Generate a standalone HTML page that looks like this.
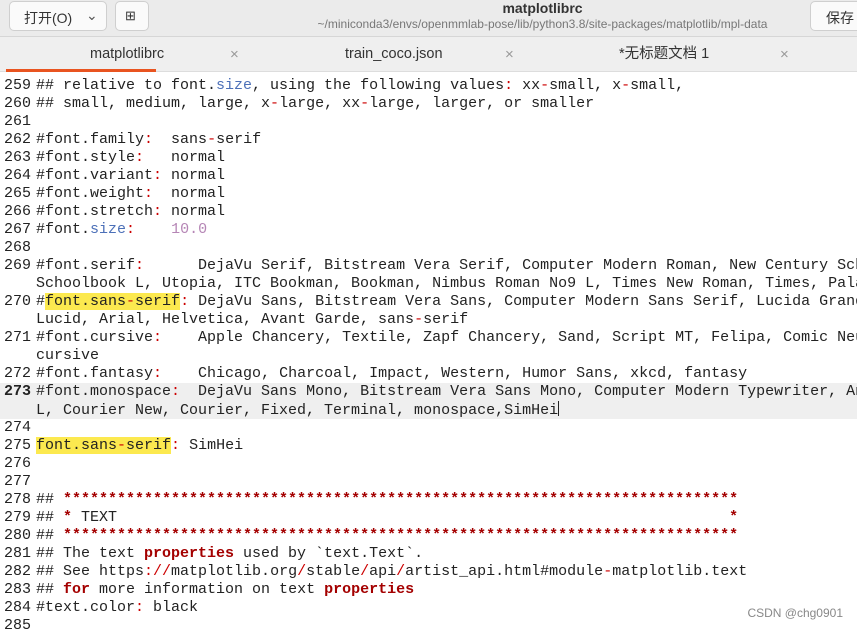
<!DOCTYPE html>
<html><head><meta charset="utf-8"><style>
*{margin:0;padding:0;box-sizing:border-box}
body{width:857px;height:631px;overflow:hidden;background:#fff;font-family:"Liberation Sans","Noto Sans CJK SC",sans-serif;position:relative}
#hdr{position:absolute;left:0;top:0;width:857px;height:37px;background:#ebebeb;border-bottom:1px solid #d6d6d6}
.btn{position:absolute;background:#fafafa;border:1px solid #cfcfcf;border-radius:5px;font-size:14px;color:#333}
#tabs{position:absolute;left:0;top:37px;width:857px;height:35px;background:#efefef;border-bottom:1px solid #ddd}
.tab{position:absolute;top:0;height:35px;line-height:35px;font-size:14.5px;color:#333}
.x{position:absolute;top:0;height:35px;line-height:35px;font-size:15px;color:#999}
#ed{position:absolute;left:0;top:72px;width:857px;height:559px;overflow:hidden}
.r{position:absolute;left:0;height:18px;width:857px;font-family:"Liberation Mono",monospace;font-size:15px;line-height:18px;white-space:pre;color:#222}
.n{position:absolute;left:4px}
.t{position:absolute;left:36px}
.p{color:#c00}
.s{color:#4c70b8}
.v{color:#b585b5}
.b{color:#a40000;font-weight:bold}
.h{background:#fce94f}
.cur{background:#efefef}
</style></head><body>
<div id="hdr">
 <div class="btn" style="left:9px;top:1px;width:98px;height:30px;"><span style="position:absolute;left:14px;top:6px">打开(O)</span><span style="position:absolute;left:76px;top:5px;color:#555">⌄</span></div>
 <div class="btn" style="left:115px;top:1px;width:34px;height:30px;"><span style="position:absolute;left:9px;top:6px;font-size:13px">⊞</span></div>
 <div style="position:absolute;left:0;width:1085px;top:0;text-align:center;font-weight:bold;font-size:14px;color:#333">matplotlibrc</div>
 <div style="position:absolute;left:0;width:1085px;top:17px;text-align:center;font-size:12px;color:#777">~/miniconda3/envs/openmmlab-pose/lib/python3.8/site-packages/matplotlib/mpl-data</div>
 <div class="btn" style="left:810px;top:1px;width:60px;height:30px;"><span style="position:absolute;left:15px;top:6px">保存</span></div>
</div>
<div id="tabs">
 <span class="tab" style="left:90px">matplotlibrc</span><span class="x" style="left:230px">×</span>
 <div style="position:absolute;left:6px;top:32px;width:150px;height:3px;background:#e95420"></div>
 <span class="tab" style="left:345px">train_coco.json</span><span class="x" style="left:505px">×</span>
 <span class="tab" style="left:619px">*无标题文档 1</span><span class="x" style="left:780px">×</span>
</div>
<div id="ed">
<div class="r" style="top:5px"><span class="n">259</span><span class="t">## relative to font.<span class="s">size</span>, using the following values<span class="p">:</span> xx<span class="p">-</span>small, x<span class="p">-</span>small,</span></div>
<div class="r" style="top:23px"><span class="n">260</span><span class="t">## small, medium, large, x<span class="p">-</span>large, xx<span class="p">-</span>large, larger, or smaller</span></div>
<div class="r" style="top:41px"><span class="n">261</span></div>
<div class="r" style="top:59px"><span class="n">262</span><span class="t">#font.family<span class="p">:</span>  sans<span class="p">-</span>serif</span></div>
<div class="r" style="top:77px"><span class="n">263</span><span class="t">#font.style<span class="p">:</span>   normal</span></div>
<div class="r" style="top:95px"><span class="n">264</span><span class="t">#font.variant<span class="p">:</span> normal</span></div>
<div class="r" style="top:113px"><span class="n">265</span><span class="t">#font.weight<span class="p">:</span>  normal</span></div>
<div class="r" style="top:131px"><span class="n">266</span><span class="t">#font.stretch<span class="p">:</span> normal</span></div>
<div class="r" style="top:149px"><span class="n">267</span><span class="t">#font.<span class="s">size</span><span class="p">:</span>    <span class="v">10.0</span></span></div>
<div class="r" style="top:167px"><span class="n">268</span></div>
<div class="r" style="top:185px"><span class="n">269</span><span class="t">#font.serif<span class="p">:</span>      DejaVu Serif, Bitstream Vera Serif, Computer Modern Roman, New Century Sch</span></div>
<div class="r" style="top:203px"><span class="t">Schoolbook L, Utopia, ITC Bookman, Bookman, Nimbus Roman No9 L, Times New Roman, Times, Pala</span></div>
<div class="r" style="top:221px"><span class="n">270</span><span class="t">#<span class="h">font.sans<span class="p">-</span>serif</span><span class="p">:</span> DejaVu Sans, Bitstream Vera Sans, Computer Modern Sans Serif, Lucida Grand</span></div>
<div class="r" style="top:239px"><span class="t">Lucid, Arial, Helvetica, Avant Garde, sans<span class="p">-</span>serif</span></div>
<div class="r" style="top:257px"><span class="n">271</span><span class="t">#font.cursive<span class="p">:</span>    Apple Chancery, Textile, Zapf Chancery, Sand, Script MT, Felipa, Comic Neu</span></div>
<div class="r" style="top:275px"><span class="t">cursive</span></div>
<div class="r" style="top:293px"><span class="n">272</span><span class="t">#font.fantasy<span class="p">:</span>    Chicago, Charcoal, Impact, Western, Humor Sans, xkcd, fantasy</span></div>
<div class="r cur" style="top:311px;height:36px"><span class="n" style="font-weight:bold">273</span><span class="t">#font.monospace<span class="p">:</span>  DejaVu Sans Mono, Bitstream Vera Sans Mono, Computer Modern Typewriter, An</span></div>
<div class="r" style="top:329px"><span class="t">L, Courier New, Courier, Fixed, Terminal, monospace,SimHei<span style="display:inline-block;width:1px;height:15px;background:#222;vertical-align:-2px"></span></span></div>
<div class="r" style="top:347px"><span class="n">274</span></div>
<div class="r" style="top:365px"><span class="n">275</span><span class="t"><span class="h">font.sans<span class="p">-</span>serif</span><span class="p">:</span> SimHei</span></div>
<div class="r" style="top:383px"><span class="n">276</span></div>
<div class="r" style="top:401px"><span class="n">277</span></div>
<div class="r" style="top:419px"><span class="n">278</span><span class="t">## <span class="b">***************************************************************************</span></span></div>
<div class="r" style="top:437px"><span class="n">279</span><span class="t">## <span class="b">*</span> TEXT                                                                    <span class="b">*</span></span></div>
<div class="r" style="top:455px"><span class="n">280</span><span class="t">## <span class="b">***************************************************************************</span></span></div>
<div class="r" style="top:473px"><span class="n">281</span><span class="t">## The text <span class="b">properties</span> used by `text.Text`.</span></div>
<div class="r" style="top:491px"><span class="n">282</span><span class="t">## See https<span class="p">://</span>matplotlib.org<span class="p">/</span>stable<span class="p">/</span>api<span class="p">/</span>artist_api.html#module<span class="p">-</span>matplotlib.text</span></div>
<div class="r" style="top:509px"><span class="n">283</span><span class="t">## <span class="b">for</span> more information on text <span class="b">properties</span></span></div>
<div class="r" style="top:527px"><span class="n">284</span><span class="t">#text.color<span class="p">:</span> black</span></div>
<div class="r" style="top:545px"><span class="n">285</span></div>
</div>
<div style="position:absolute;right:14px;top:606px;font-size:12px;color:#888">CSDN @chg0901</div>
</body></html>
